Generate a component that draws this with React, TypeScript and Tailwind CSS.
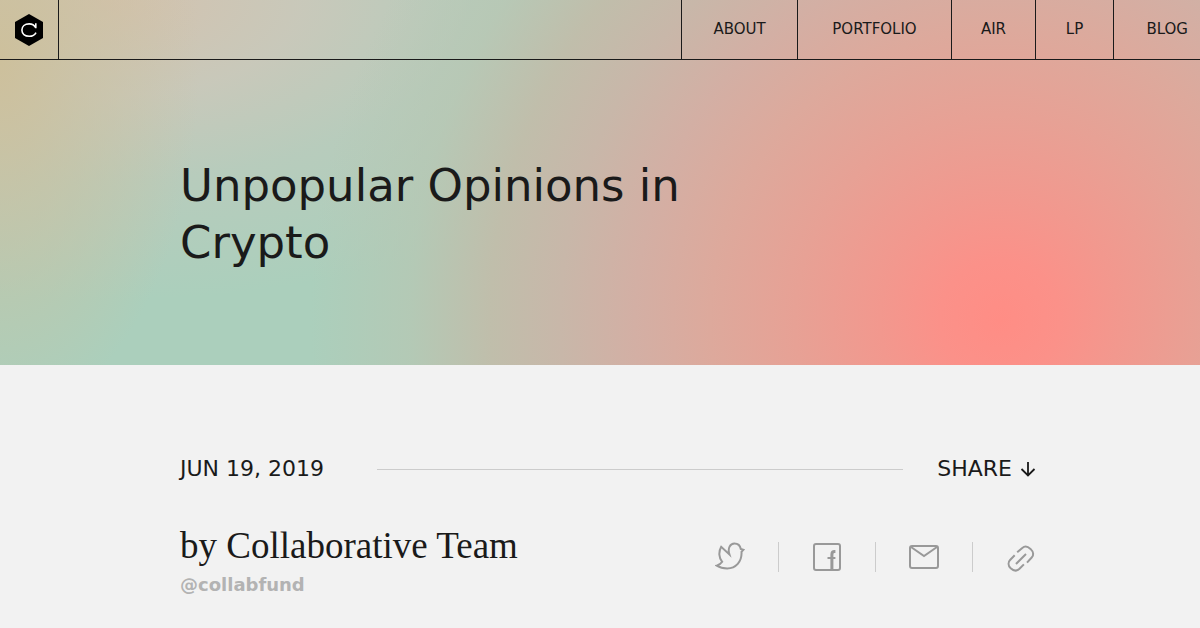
import type { ReactNode } from 'react';

interface NavItem {
  label: string;
  href: string;
  width: string;
}

const navItems: NavItem[] = [
  { label: 'ABOUT', href: '#about', width: 'w-[116px]' },
  { label: 'PORTFOLIO', href: '#portfolio', width: 'w-[154px]' },
  { label: 'AIR', href: '#air', width: 'w-[84px]' },
  { label: 'LP', href: '#lp', width: 'w-[78px]' },
  { label: 'BLOG', href: '#blog', width: 'w-[87px]' },
];

function Logo() {
  return (
    <svg viewBox="0 0 28 32" className="h-8 w-7" aria-hidden="true">
      <path d="M14 0 28 8v16l-14 8L0 24V8z" fill="#000" />
      <path
        d="M20.8 9.2v5M20.4 13.4C19.2 11 17 9.9 14.2 9.9c-4.4 0-7.3 2.5-7.3 6.2s2.9 6.2 7.3 6.2c3.1 0 5.6-1.3 6.8-3.7"
        fill="none"
        stroke="#fff"
        strokeWidth="1.6"
      />
    </svg>
  );
}

function Header() {
  return (
    <header className="flex h-[60px] justify-between border-b border-[#1a1a1a]">
      <a
        href="#home"
        aria-label="Collaborative Fund"
        className="flex w-[59px] items-center justify-center border-r border-[#1a1a1a]"
      >
        <Logo />
      </a>
      <nav className="flex text-[15px]">
        {navItems.map((item) => (
          <a
            key={item.label}
            href={item.href}
            className={`flex items-center justify-center border-l border-[#1a1a1a] last:justify-end last:pr-3 ${item.width}`}
          >
            {item.label}
          </a>
        ))}
      </nav>
    </header>
  );
}

interface ShareIconProps {
  label: string;
  children: ReactNode;
}

function ShareIcon({ label, children }: ShareIconProps) {
  return (
    <a href="#share" aria-label={label}>
      <svg viewBox="0 0 30 30" className="size-[30px]" fill="none" stroke="#999" strokeWidth="2">
        {children}
      </svg>
    </a>
  );
}

function ShareLinks() {
  return (
    <div className="flex items-center gap-[33px]">
      <ShareIcon label="Twitter">
        <path d="M1.8 23.6C4.4 22.8 6 21.6 7.2 19.8C3.8 15.9 3.4 9.8 6.2 4.8L14.4 12.4C12.4 6.2 15.2 1.4 19.4 1.4C23 1.4 25.2 3.6 25.8 7L28.4 7.8L26.5 9.8C27.2 19.8 20.6 26.4 12.2 26.4C8 26.4 4.6 25.4 1.8 23.6Z" />
      </ShareIcon>
      <span className="h-[30px] w-px bg-[#ccc]" />
      <ShareIcon label="Facebook">
        <rect x="2" y="2" width="26" height="26" rx="2" />
        <path d="M23.4 9.6H22.6C20.7 9.6 19.9 10.6 19.9 12.5V28" strokeWidth="3" />
        <path d="M15.5 16H23.4" />
      </ShareIcon>
      <span className="h-[30px] w-px bg-[#ccc]" />
      <ShareIcon label="Email">
        <rect x="1" y="4" width="28" height="22" rx="2" />
        <path d="M2 5 15 14 28 5" />
      </ShareIcon>
      <span className="h-[30px] w-px bg-[#ccc]" />
      <ShareIcon label="Copy link">
        <path d="M11.2 10.2 16.3 5.9C18.3 4.2 21.4 4.1 24.5 6.9C27.7 10 27.9 13.3 25.7 15.5L21 20.6" />
        <path d="M8.7 13.3 4.3 17.8C2 20.1 1.9 23.5 4.7 26.3C7.7 29.1 11.1 29 13.5 26.8L17.9 22.4" />
        <path d="M10 22 20 12" />
      </ShareIcon>
    </div>
  );
}

export default function App() {
  return (
    <div className="min-h-screen bg-[#f2f2f2] font-['DejaVu_Sans',sans-serif] text-[#1a1a1a]">
      <div className="bg-[radial-gradient(circle_at_1000px_320px,#ff8d85_0px,#fb9189_60px,#f2988e_120px,#e7a195_205px,#dda99c_290px,#d3afa4_365px,#c8b7a9_440px,rgba(193,189,170,0.95)_510px,rgba(184,198,178,0.65)_590px,rgba(179,202,184,0)_690px),radial-gradient(ellipse_200px_360px_at_0px_60px,rgba(205,192,156,1)_0%,rgba(203,193,160,0.65)_40%,rgba(171,207,188,0)_100%),radial-gradient(ellipse_600px_300px_at_110px_0px,#d4c2ae_0%,rgba(202,200,186,0.95)_32%,rgba(190,202,188,0.65)_60%,rgba(171,207,188,0)_100%),linear-gradient(#abcfbc,#abcfbc)]">
        <Header />
        <h1 className="pt-[97px] pr-[164px] pb-[94px] pl-[15%] text-[45px] leading-[57px]">
          <span className="block max-w-[600px]">Unpopular Opinions in Crypto</span>
        </h1>
      </div>

      <main className="pt-[90px] pr-[164px] pb-7 pl-[15%]">
        <div className="flex items-center text-[22px] leading-7">
          <time dateTime="2019-06-19" className="w-[173px]">
            JUN 19, 2019
          </time>
          <span className="mx-6 h-px flex-1 bg-[#ccc]" />
          <button type="button" className="flex w-[109px] items-center justify-end gap-2">
            SHARE
            <svg viewBox="0 0 16 16" className="size-4" fill="none" stroke="currentColor" strokeWidth="1.8">
              <path d="M8 1v13M1.5 8 8 14.5 14.5 8" />
            </svg>
          </button>
        </div>

        <div className="mt-10 flex items-start justify-between">
          <div>
            <p className="font-['Liberation_Serif',serif] text-[37px] leading-[46px]">by Collaborative Team</p>
            <a href="#collabfund" className="block text-[18px] leading-8 font-bold text-[#b3b3b3]">
              @collabfund
            </a>
          </div>
          <div className="pt-[19px]">
            <ShareLinks />
          </div>
        </div>
      </main>
    </div>
  );
}
